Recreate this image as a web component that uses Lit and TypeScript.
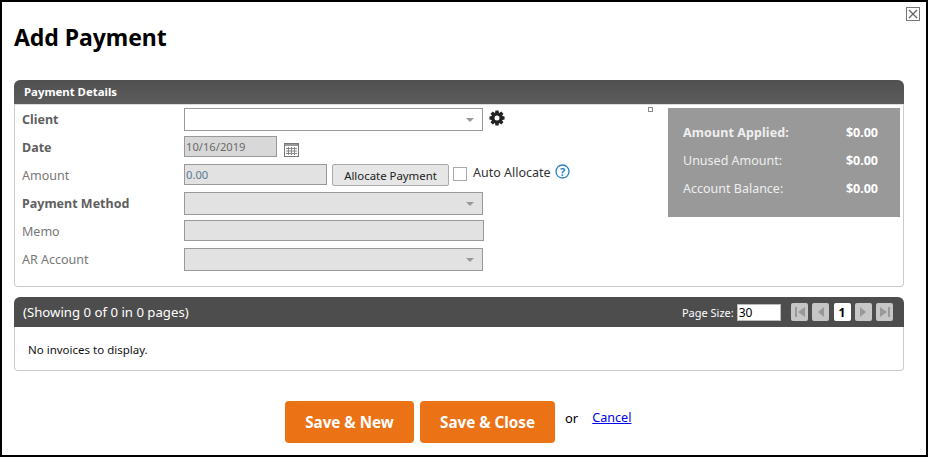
import { LitElement, html, css } from "lit";
import { customElement } from "lit/decorators.js";

const caret = html`<span class="caret"></span>`;
const pagerIcon = (d: string) => html`<span class="pg"><svg width="16" height="16" viewBox="0 0 16 16"><path d=${d} fill="#999"></path></svg></span>`;

const gearPath = (() => {
  const pts: string[] = [];
  const teeth = 8;
  for (let i = 0; i < teeth; i++) {
    const a = (i * Math.PI * 2) / teeth;
    for (const [r, o] of [[5.6, -0.36], [7.7, -0.2], [7.7, 0.2], [5.6, 0.36]] as const) {
      pts.push(`${(8 + r * Math.sin(a + o)).toFixed(2)} ${(8 - r * Math.cos(a + o)).toFixed(2)}`);
    }
  }
  return `M${pts.join("L")}ZM8 5.5a2.500 2.500 0 1 0 0 5a2.500 2.500 0 0 0 0-5Z`;
})();

@customElement("app-root")
export class AppRoot extends LitElement {
  static styles = css`
    :host { display: block; width: 928px; height: 457px; font-family: "Noto Sans", "Open Sans", sans-serif; }
    * { box-sizing: border-box; }
    .frame { width: 928px; height: 457px; border: 2px solid #000; background: #fff; padding: 5px 22px 0 12px; display: flex; flex-direction: column; }
    .close { align-self: flex-end; width: 14px; height: 14px; margin-right: -16px; display: block; }
    h1 { margin: 0 0 0; font-size: 23px; line-height: 32px; font-weight: 700; color: #000; height: 33px; letter-spacing: -0.05px; }
    .panel-head { margin-top: 26px; height: 24px; border-radius: 6px 6px 0 0; background: linear-gradient(#505050, #5c5c5c); color: #fff; font-size: 11.4px; font-weight: 700; line-height: 23px; padding-left: 10px; }
    .panel { height: 183px; border: 1px solid #ccc; border-top: 1px solid #ddd; border-radius: 0 0 4px 4px; display: flex; position: relative; padding: 3px 3px 0 7px; }
    .form { display: grid; grid-template-columns: 162px auto; grid-auto-rows: 28px; align-content: start; }
    .lab { font-size: 12.5px; color: #777; line-height: 23px; height: 28px; }
    .lab.b { font-weight: 700; color: #5f5f5f; }
    .row { display: flex; align-items: flex-start; height: 28px; }
    .sel { width: 299px; height: 23px; border: 1px solid #999; background: #fff; position: relative; display: block; }
    .sel.dis { background: #e2e2e2; }
    .caret { position: absolute; right: 8px; top: 9px; border: 4.5px solid transparent; border-top-color: #999; border-bottom: 0; }
    .gear { margin: 2px 0 0 6px; display: block; }
    .inp { height: 21px; border: 1px solid #999; background: #e2e2e2; font-size: 11.2px; line-height: 20px; padding-left: 1px; color: #6a6a6a; }
    .date { width: 93px; background: #d8d8d8; }
    .cal { margin: 7px 0 0 7px; display: block; }
    .amt { width: 143px; color: #5a7a96; }
    .alloc { margin-left: 5px; width: 117px; height: 22px; border: 1px solid #aaa; border-radius: 2px; background: #e6e6e6; font-size: 11.4px; color: #222; text-align: center; line-height: 21px; }
    .chk { margin: 3px 0 0 4px; width: 14px; height: 14px; border: 1px solid #aaa; background: #fff; }
    .auto { margin-left: 6px; font-size: 12.5px; color: #333; line-height: 18px; }
    .help { margin: 0 0 0 4px; display: block; }
    .memo { width: 300px; height: 21px; }
    .handle { position: absolute; left: 633px; top: 2px; width: 5px; height: 5px; border: 1px solid #888; background: #fff; }
    .spacer { flex: 1; }
    .summary { width: 232px; height: 109px; background: #999; padding: 16px 22px 0 15px; color: #eee; font-size: 12.5px; }
    .sum { display: flex; justify-content: space-between; height: 28px; line-height: 18px; }
    .sum .l.b { font-weight: 700; letter-spacing: 0.1px; }
    .sum .v { font-weight: 700; color: #fff; }
    .grid-head { margin-top: 10px; height: 30px; border-radius: 6px 6px 0 0; background: #4d4d4d; color: #fff; display: flex; align-items: center; padding: 0 11px 0 9px; font-size: 13.2px; }
    .grid-head .sp { flex: 1; }
    .ps { font-size: 11px; margin-right: 3px; }
    .psi { width: 44px; height: 17px; background: #fff; border: 1px solid #bbb; color: #000; font-size: 12px; line-height: 15px; margin-right: 6px; padding-left: 1px; }
    .pg { width: 17px; height: 18px; background: #c6c6c6; border-radius: 2px; margin-left: 4.25px; display: flex; align-items: center; justify-content: center; }
    .pg.cur { background: #fff; color: #000; font-size: 12px; font-weight: 700; }
    .pg svg { display: block; }
    .grid-body { height: 44px; border: 1px solid #ccc; border-top: 0; border-radius: 0 0 4px 4px; padding: 0 13px; font-size: 11.5px; line-height: 45px; color: #111; }
    .foot { display: flex; margin-top: 30px; padding-left: 271px; align-items: flex-start; }
    .btn { height: 42px; background: #ec7216; color: #fff; border-radius: 4px; font-size: 15.2px; font-weight: 700; text-align: center; line-height: 42px; }
    .new { width: 129px; }
    .cl { width: 135px; margin-left: 6px; }
    .or { margin-left: 10px; font-size: 13px; line-height: 34px; color: #000; }
    a { margin-left: 14px; font-size: 12.6px; line-height: 34px; color: #00e; text-decoration: underline; }
  `;

  render() {
    return html`<div class="frame">
      <svg class="close" viewBox="0 0 14 14"><rect x=".5" y=".5" width="13" height="13" fill="#fff" stroke="#777"></rect><path d="M3 3l8 8M11 3l-8 8" stroke="#666" stroke-width="1.3"></path></svg>
      <h1>Add Payment</h1>
      <div class="panel-head">Payment Details</div>
      <div class="panel">
        <div class="form">
          <div class="lab b">Client</div>
          <div class="row"><span class="sel">${caret}</span>
            <svg class="gear" width="16" height="16" viewBox="0 0 16 16"><path fill-rule="evenodd" fill="#222" d=${gearPath}></path></svg>
          </div>
          <div class="lab b">Date</div>
          <div class="row"><div class="inp date">10/16/2019</div>
            <svg class="cal" width="15" height="14" viewBox="0 0 15 14"><rect x=".5" y=".5" width="14" height="13" fill="#fff" stroke="#777"></rect><rect x="1" y="1" width="13" height="2" fill="#999"></rect><path d="M2 5.500h11M2 8h11M2 10.500h11M4.500 4v8M7.500 4v8M10.500 4v8" stroke="#888"></path></svg>
          </div>
          <div class="lab">Amount</div>
          <div class="row"><div class="inp amt">0.00</div><div class="alloc">Allocate Payment</div><div class="chk"></div><div class="auto">Auto Allocate</div>
            <svg class="help" width="15" height="15" viewBox="0 0 15 15"><circle cx="7.500" cy="7.500" r="6.500" fill="#fff" stroke="#2a7fc4" stroke-width="1.300"></circle><text x="7.500" y="11.500" text-anchor="middle" font-size="11" font-weight="700" fill="#2a7fc4" font-family="Noto Sans">?</text></svg>
          </div>
          <div class="lab b">Payment Method</div>
          <div class="row"><span class="sel dis">${caret}</span></div>
          <div class="lab">Memo</div>
          <div class="row"><div class="inp memo"></div></div>
          <div class="lab">AR Account</div>
          <div class="row"><span class="sel dis">${caret}</span></div>
        </div>
        <div class="handle"></div>
        <div class="spacer"></div>
        <div class="summary">
          <div class="sum"><span class="l b">Amount Applied:</span><span class="v">$0.00</span></div>
          <div class="sum"><span class="l">Unused Amount:</span><span class="v">$0.00</span></div>
          <div class="sum"><span class="l">Account Balance:</span><span class="v">$0.00</span></div>
        </div>
      </div>
      <div class="grid-head">
        <span>(Showing 0 of 0 in 0 pages)</span><span class="sp"></span>
        <span class="ps">Page Size:</span><div class="psi">30</div>
        ${pagerIcon("M3 3h2v10H3zM13 3v10L6 8z")}
        ${pagerIcon("M11 3v10L5 8z")}
        <span class="pg cur">1</span>
        ${pagerIcon("M5 3v10l6-5z")}
        ${pagerIcon("M11 3h2v10h-2zM3 3v10l7-5z")}
      </div>
      <div class="grid-body">No invoices to display.</div>
      <div class="foot">
        <div class="btn new">Save &amp; New</div>
        <div class="btn cl">Save &amp; Close</div>
        <span class="or">or</span>
        <a href="#">Cancel</a>
      </div>
    </div>`;
  }
}
